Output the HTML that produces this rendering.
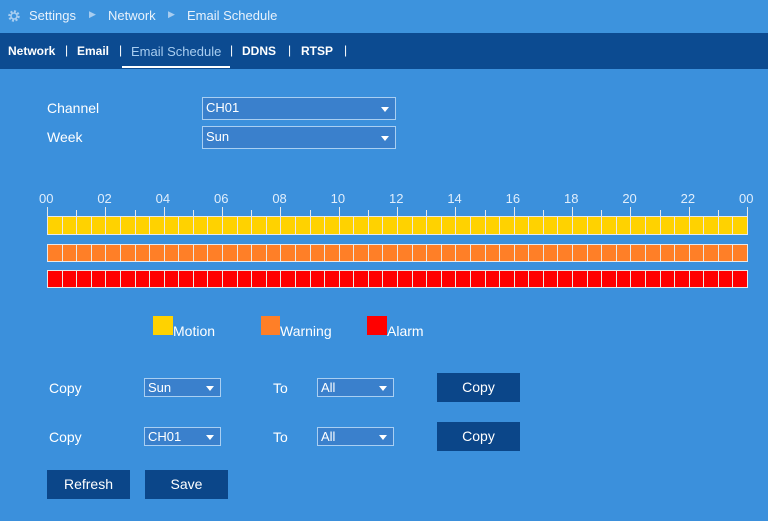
<!DOCTYPE html>
<html><head><meta charset="utf-8"><style>
*{margin:0;padding:0;box-sizing:border-box}
body{width:768px;height:521px;background:#3b90dc;font-family:"Liberation Sans",Arial,sans-serif;color:#fff;position:relative;overflow:hidden;font-size:14px}
.a{position:absolute}
.top{left:0;top:0;width:768px;height:33px;background:#3d93dd;font-size:13px;color:#e8f2fc}
.nav{left:0;top:33px;width:768px;height:36px;background:#0c4b91;font-size:12px;font-weight:bold}
.sel{background:#3a80cc;border:1px solid #a9cff2;color:#fff;font-size:13px;padding-left:3px;line-height:20px}
.sel:after{content:"";position:absolute;right:6px;top:50%;margin-top:-2px;border:4px solid transparent;border-top:5px solid #fff;border-bottom:0}
.btn{background:#0b4689;color:#fff;text-align:center;font-size:14px;line-height:29px;height:29px;width:83px}
.cell{position:absolute;border:1px solid #e8e8e8}
</style></head><body>
<div class="a top">
<svg class="a" style="left:7px;top:9px" width="14" height="14" viewBox="0 0 14 14"><circle cx="7" cy="7" r="4.5" fill="none" stroke="#a8cdf0" stroke-width="2.5" stroke-dasharray="2 1.5"/><circle cx="7" cy="7" r="3" fill="none" stroke="#a8cdf0" stroke-width="1.5"/></svg>
<span class="a" style="left:29px;top:8px">Settings</span>
<span class="a" style="left:89px;top:9px;font-size:9px;color:#a8cdf0">▶</span>
<span class="a" style="left:108px;top:8px">Network</span>
<span class="a" style="left:168px;top:9px;font-size:9px;color:#a8cdf0">▶</span>
<span class="a" style="left:187px;top:8px">Email Schedule</span>
</div>
<div class="a nav">
<span class="a" style="left:8px;top:11px">Network</span>
<span class="a" style="left:65px;top:10px;font-weight:normal">|</span>
<span class="a" style="left:77px;top:11px">Email</span>
<span class="a" style="left:119px;top:10px;font-weight:normal">|</span>
<span class="a" style="left:131px;top:11px;font-weight:normal;color:#a8cdf0;font-size:13px">Email Schedule</span>
<div class="a" style="left:122px;top:33px;width:108px;height:2px;background:#fff"></div>
<span class="a" style="left:230px;top:10px;font-weight:normal">|</span>
<span class="a" style="left:242px;top:11px">DDNS</span>
<span class="a" style="left:288px;top:10px;font-weight:normal">|</span>
<span class="a" style="left:301px;top:11px">RTSP</span>
<span class="a" style="left:344px;top:10px;font-weight:normal">|</span>
</div>
<span class="a" style="left:47px;top:100px">Channel</span>
<span class="a" style="left:47px;top:129px">Week</span>
<div class="a sel" style="left:202px;top:97px;width:194px;height:23px">CH01</div>
<div class="a sel" style="left:202px;top:126px;width:194px;height:23px">Sun</div>
<div id="g"></div>
<div class="a" style="left:153px;top:316px;width:20px;height:19px;background:#ffd200"></div><span class="a" style="left:173px;top:323px">Motion</span>
<div class="a" style="left:261px;top:316px;width:19px;height:19px;background:#ff7f27"></div><span class="a" style="left:280px;top:323px">Warning</span>
<div class="a" style="left:367px;top:316px;width:20px;height:19px;background:#ff0000"></div><span class="a" style="left:387px;top:323px">Alarm</span>
<span class="a" style="left:49px;top:380px">Copy</span>
<div class="a sel" style="left:144px;top:378px;width:77px;height:19px;line-height:17px">Sun</div>
<span class="a" style="left:273px;top:380px">To</span>
<div class="a sel" style="left:317px;top:378px;width:77px;height:19px;line-height:17px">All</div>
<div class="a btn" style="left:437px;top:373px">Copy</div>
<span class="a" style="left:49px;top:429px">Copy</span>
<div class="a sel" style="left:144px;top:427px;width:77px;height:19px;line-height:17px">CH01</div>
<span class="a" style="left:273px;top:429px">To</span>
<div class="a sel" style="left:317px;top:427px;width:77px;height:19px;line-height:17px">All</div>
<div class="a btn" style="left:437px;top:422px">Copy</div>
<div class="a btn" style="left:47px;top:470px">Refresh</div>
<div class="a btn" style="left:145px;top:470px">Save</div>
<script>
var g=document.getElementById('g'),h='',x0=47,w=700/48;
for(var i=0;i<=12;i++){var x=x0+i*w*4;var l=(i*2<10?'0':'')+(i*2%24);h+='<span class="a" style="left:'+(x-8)+'px;top:191px;font-size:13px;color:#e0eefc">'+(i==12?'00':l)+'</span>';}
for(var i=0;i<=24;i++){var x=Math.round(x0+i*w*2);h+='<div class="a" style="left:'+x+'px;top:'+(i%2?210:207)+'px;width:1px;height:'+(i%2?6:9)+'px;background:#e8e8e8"></div>';}
var rows=[[216,19,'#ffd200'],[244,18,'#ff7f27'],[270,18,'#ff0000']];
rows.forEach(function(r){for(var i=0;i<48;i++){var a=Math.round(x0+i*w),b=Math.round(x0+(i+1)*w);h+='<div class="cell" style="left:'+a+'px;top:'+r[0]+'px;width:'+(b-a+1)+'px;height:'+r[1]+'px;background:'+r[2]+'"></div>';}});
g.innerHTML=h;
</script>
</body></html>
